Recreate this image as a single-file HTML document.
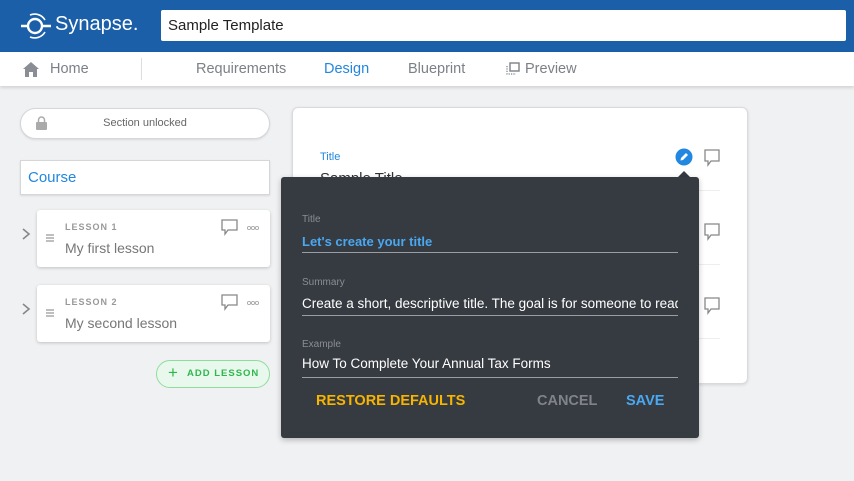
<!DOCTYPE html>
<html><head><meta charset="utf-8"><style>
*{margin:0;padding:0;box-sizing:border-box}
body{width:854px;height:481px;overflow:hidden;background:#f0f1f3;font-family:"Liberation Sans",sans-serif;position:relative}
.a{position:absolute}
</style></head><body>
<div class="a" style="left:0;top:0;width:854px;height:52px;background:#1b5fa9"></div>
<svg class="a" style="left:18px;top:12px" width="36" height="28" viewBox="0 0 36 28"><circle cx="17" cy="14" r="7" fill="none" stroke="#fff" stroke-width="2.4"/><path d="M3 14H9M25 14H33" stroke="#fff" stroke-width="2.4"/><path d="M12 3A12 12 0 0 1 27 8" fill="none" stroke="#fff" stroke-width="1.6"/><path d="M27 20A12 12 0 0 1 12 25" fill="none" stroke="#fff" stroke-width="1.6"/></svg>
<div class="a" style="left:55px;top:13px;color:#fff;font-size:20px">Synapse.</div>
<div class="a" style="left:161px;top:10px;width:685px;height:31px;background:#fff;border-radius:2px;font-size:15px;color:#222;padding:7px 7px">Sample Template</div>
<div class="a" style="left:0;top:52px;width:854px;height:34px;background:#fff;box-shadow:0 2px 3px rgba(0,0,0,.12)"></div>
<svg class="a" style="left:23px;top:62px" width="16" height="15" viewBox="0 0 16 15"><path d="M8 0L0 7H2V15H6V10H10V15H14V7H16Z" fill="#8a8e94"/></svg>
<div class="a" style="left:50px;top:61px;font-size:14.5px;color:#7c8087">Home</div>
<div class="a" style="left:141px;top:58px;width:1px;height:22px;background:#ddd"></div>
<div class="a" style="left:196px;top:61px;font-size:14.5px;color:#7c8087">Requirements</div>
<div class="a" style="left:324px;top:61px;font-size:14.5px;color:#2287e0">Design</div>
<div class="a" style="left:408px;top:61px;font-size:14.5px;color:#7c8087">Blueprint</div>
<svg class="a" style="left:506px;top:62px" width="14" height="13" viewBox="0 0 14 13"><rect x="4" y="1" width="9" height="8" fill="none" stroke="#7c8087" stroke-width="1.4"/><path d="M1 4V12H10" fill="none" stroke="#7c8087" stroke-width="1.2" stroke-dasharray="1.2 1.2"/></svg>
<div class="a" style="left:525px;top:61px;font-size:14.5px;color:#7c8087">Preview</div>

<div class="a" style="left:20px;top:108px;width:250px;height:31px;background:#fff;border:1px solid #d4d6da;border-radius:16px;box-shadow:0 1px 2px rgba(0,0,0,.1);font-size:11px;color:#666;text-align:center;line-height:29px">Section unlocked</div>
<svg class="a" style="left:36px;top:116px" width="11" height="14" viewBox="0 0 11 14"><path d="M2.5 6V4a3 3 0 0 1 6 0v2" fill="none" stroke="#aaa" stroke-width="1.5"/><rect x="0" y="6" width="11" height="8" rx="1" fill="#aaa"/></svg>
<div class="a" style="left:20px;top:160px;width:250px;height:35px;background:#fff;border:1px solid #d4d6da;box-shadow:0 1px 2px rgba(0,0,0,.1);font-size:15px;color:#2287e0;padding:8px 7px">Course</div>

<div class="a" style="left:37px;top:210px;width:233px;height:57px;background:#fff;border-radius:3px;box-shadow:0 1px 3px rgba(0,0,0,.2)"></div>
<div class="a" style="left:65px;top:222px;font-size:9px;letter-spacing:1px;color:#999;font-weight:bold">LESSON 1</div>
<div class="a" style="left:65px;top:240px;font-size:14px;color:#777">My first lesson</div>
<div class="a" style="left:37px;top:285px;width:233px;height:57px;background:#fff;border-radius:3px;box-shadow:0 1px 3px rgba(0,0,0,.2)"></div>
<div class="a" style="left:65px;top:297px;font-size:9px;letter-spacing:1px;color:#999;font-weight:bold">LESSON 2</div>
<div class="a" style="left:65px;top:315px;font-size:14px;color:#777">My second lesson</div>
<svg class="a" style="left:0;top:0" width="854" height="481">
<g fill="none" stroke="#888" stroke-width="1.6"><path d="M23 229L29 234L23 239"/><path d="M23 304L29 309L23 314"/></g>
<g stroke="#999" stroke-width="1.2"><path d="M46 235H54M46 238H54M46 241H54"/><path d="M46 310H54M46 313H54M46 316H54"/></g>
<g fill="none" stroke="#888" stroke-width="1.3">
<path d="M222 220H237V230H228L225 234V230H222Z"/><path d="M222 295H237V305H228L225 309V305H222Z"/>
</g>
<g fill="none" stroke="#aaa" stroke-width=".9"><circle cx="249" cy="228" r="1.6"/><circle cx="253" cy="228" r="1.6"/><circle cx="257" cy="228" r="1.6"/><circle cx="249" cy="303" r="1.6"/><circle cx="253" cy="303" r="1.6"/><circle cx="257" cy="303" r="1.6"/></g>
</svg>
<div class="a" style="left:156px;top:360px;width:114px;height:28px;border-radius:14px;background:#e9f8ec;border:1px solid #8fdc9f;color:#2eb84c;font-size:9.5px;font-weight:bold;letter-spacing:1px;line-height:26px;padding-left:30px">ADD LESSON</div>
<div class="a" style="left:168px;top:363px;color:#2eb84c;font-size:17px">+</div>

<div class="a" style="left:292px;top:107px;width:456px;height:277px;background:#fff;border:1px solid #d8dadd;border-radius:6px;box-shadow:0 1px 3px rgba(0,0,0,.12)"></div>
<div class="a" style="left:320px;top:151px;font-size:11px;color:#2287e0">Title</div>
<div class="a" style="left:320px;top:170px;font-size:15px;color:#333">Sample Title</div>
<div class="a" style="left:320px;top:190px;width:400px;height:1px;background:#eee"></div>
<div class="a" style="left:320px;top:264px;width:400px;height:1px;background:#eee"></div>
<div class="a" style="left:320px;top:338px;width:400px;height:1px;background:#eee"></div>
<svg class="a" style="left:0;top:0" width="854" height="481">
<g fill="none" stroke="#888" stroke-width="1.3">
<path d="M705 150H719V161H711L708 165V161H705Z"/><path d="M705 224H719V235H711L708 239V235H705Z"/><path d="M705 298H719V309H711L708 313V309H705Z"/>
</g></svg>
<svg class="a" style="left:675px;top:148px" width="18" height="18" viewBox="0 0 18 18"><circle cx="9" cy="9" r="8.5" fill="#2287e0"/><path d="M5.5 12.5L6 10L11 5L13 7L8 12Z" fill="#fff"/></svg>

<div class="a" style="left:678px;top:171px;width:0;height:0;border-left:6px solid transparent;border-right:6px solid transparent;border-bottom:6px solid #363a41"></div>
<div class="a" style="left:281px;top:177px;width:418px;height:261px;background:#363a41;border-radius:3px;box-shadow:0 2px 6px rgba(0,0,0,.25)">
<div class="a" style="left:21px;top:37px;font-size:10px;color:#8a8e94">Title</div>
<div class="a" style="left:21px;top:57px;font-size:13px;color:#4aa8f0;font-weight:bold">Let's create your title</div>
<div class="a" style="left:21px;top:75px;width:376px;height:1px;background:#9a9ea4"></div>
<div class="a" style="left:21px;top:100px;font-size:10px;color:#8a8e94">Summary</div>
<div class="a" style="left:21px;top:119px;width:376px;overflow:hidden;white-space:nowrap;font-size:13.5px;color:#fff">Create a short, descriptive title. The goal is for someone to read this</div>
<div class="a" style="left:21px;top:138px;width:376px;height:1px;background:#9a9ea4"></div>
<div class="a" style="left:21px;top:162px;font-size:10px;color:#8a8e94">Example</div>
<div class="a" style="left:21px;top:179px;font-size:13.5px;color:#fff">How To Complete Your Annual Tax Forms</div>
<div class="a" style="left:21px;top:200px;width:376px;height:1px;background:#9a9ea4"></div>
<div class="a" style="left:35px;top:216px;font-size:14.5px;font-weight:bold;color:#f7b500">RESTORE DEFAULTS</div>
<div class="a" style="left:256px;top:216px;font-size:14.5px;font-weight:bold;color:#80848a">CANCEL</div>
<div class="a" style="left:345px;top:216px;font-size:14.5px;font-weight:bold;color:#4aa8f0">SAVE</div>
</div>
</body></html>
